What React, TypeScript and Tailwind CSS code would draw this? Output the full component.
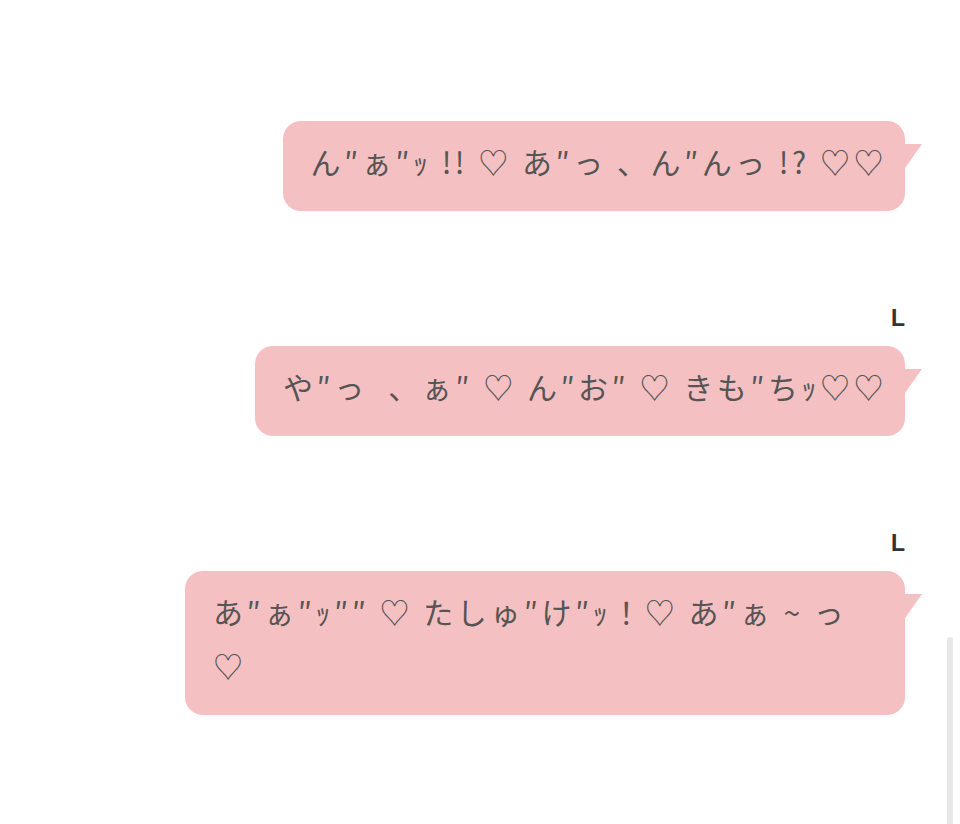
import React from "react";

const FONT = { fontFamily: '"Noto Sans CJK JP", "Noto Sans", sans-serif' };

function Tail() {
  return (
    <svg
      className="absolute right-[-17px] top-[23px]"
      width="17"
      height="24"
      viewBox="0 0 17 24"
    >
      <polygon points="0,0 17,0 0,24" fill="#f5c0c2" />
    </svg>
  );
}

function Bubble({ text }: { text: string }) {
  return (
    <div className="relative max-w-[720px] rounded-[18px] bg-[#f5c0c2] pl-[28px] pr-[18px] pt-[13px] pb-[23px]">
      <div
        className="text-[30px] leading-[54px] tracking-[3.5px] text-[#555555] whitespace-pre-wrap"
        style={FONT}
      >
        {text}
      </div>
      <Tail />
    </div>
  );
}

function Label() {
  return (
    <div
      className="mt-[96px] mb-[17px] text-[23px] font-bold leading-[22px] text-[#333333]"
      style={{ fontFamily: '"Liberation Sans", Arial, sans-serif' }}
    >
      L
    </div>
  );
}

export default function App() {
  return (
    <div className="relative w-[960px] h-[824px] overflow-hidden bg-white">
      <div className="flex flex-col items-end pt-[121px] pr-[55px]">
        <Bubble text={"ん″ぁ″ｯ !! ♡ あ″っ 、ん″んっ !? ♡♡"} />
        <Label />
        <Bubble text={"や″っ  、ぁ″ ♡ ん″お″ ♡ きも″ちｯ♡♡"} />
        <Label />
        <Bubble text={"あ″ぁ″ｯ″″ ♡ たしゅ″け″ｯ！♡ あ″ぁ ~ っ ♡"} />
      </div>
      <div className="absolute left-[947px] top-[637px] w-[6px] h-[200px] rounded-full bg-[#e8e8e8]" />
    </div>
  );
}
